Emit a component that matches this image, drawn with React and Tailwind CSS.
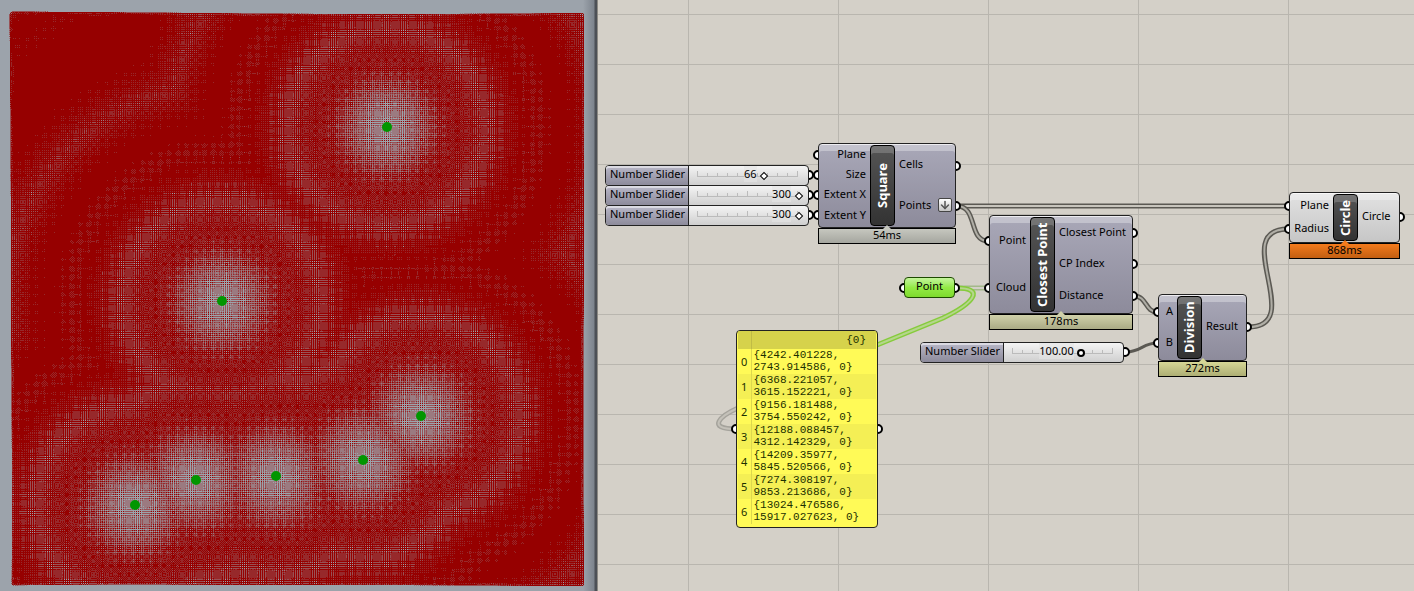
import React, { useState } from 'react';
import { ArrowDown } from 'lucide-react';
import clsx from 'clsx';

const GRID_COUNT = 301;
const SPACING = 568 / 300;
const HALF_STROKE = 0.42;
const FIELD_SIZE = 590;
const SAMPLES = FIELD_SIZE * 2;
const ATTRACTORS = [
  [387, 127],
  [222, 301],
  [421, 416],
  [363, 460],
  [276, 476],
  [196, 480],
  [135, 505],
];

// Draws every circle of the grid into a 2x supersampled buffer. The radius
// grows with the distance to the closest attractor.
function sampleCircles() {
  const buffer = new Uint8Array(SAMPLES * SAMPLES);
  for (let row = 0; row < GRID_COUNT; row++) {
    for (let col = 0; col < GRID_COUNT; col++) {
      const x = 13.5 + col * SPACING;
      const y = 15.5 + row * SPACING;
      const r = Math.min(...ATTRACTORS.map(([px, py]) => Math.hypot(px - x, py - y))) / 100;
      const outer = r + HALF_STROKE;
      const inner = Math.max(0, r - HALF_STROKE);
      for (let sy = Math.floor((y - outer) * 2); sy <= (y + outer) * 2; sy++) {
        for (let sx = Math.floor((x - outer) * 2); sx <= (x + outer) * 2; sx++) {
          const dx = sx / 2 + 0.25 - x;
          const dy = sy / 2 + 0.25 - y;
          const distance = dx * dx + dy * dy;
          if (distance <= outer * outer && distance >= inner * inner) {
            buffer[sy * SAMPLES + sx] = 1;
          }
        }
      }
    }
  }
  return buffer;
}

// One path per coverage level, made of horizontal runs
function buildField() {
  const buffer = sampleCircles();
  const levels = ['', '', '', '', ''];
  for (let y = 0; y < FIELD_SIZE; y++) {
    let start = 0;
    let previous = 0;
    for (let x = 0; x <= FIELD_SIZE; x++) {
      const at = y * 2 * SAMPLES + x * 2;
      const level =
        x === FIELD_SIZE ? -1 : buffer[at] + buffer[at + 1] + buffer[at + SAMPLES] + buffer[at + SAMPLES + 1];
      if (level !== previous) {
        if (previous > 0) levels[previous] += `M${start} ${y}h${x - start}v1h${start - x}z`;
        start = x;
        previous = level;
      }
    }
  }
  return levels;
}

const FIELD = buildField();

const COMPONENTS = [
  {
    name: 'Square', x: 220, y: 143, time: '54ms',
    size: 'w-[138px] h-[85px]', inputsWidth: 'w-[51px]',
    inputs: ['Plane', 'Size', 'Extent X', 'Extent Y'],
    outputs: ['Cells', 'Points'], flattened: 'Points',
    body: 'from-[#a9a8b8] to-[#8d8b9b]',
    timer: 'from-[#c6c7bf] to-[#a5a69f]', tip: 'border-b-[#c6c7bf]',
  },
  {
    name: 'Closest Point', x: 391, y: 215, time: '178ms',
    size: 'w-[144px] h-[99px]', inputsWidth: 'w-[40px]',
    inputs: ['Point', 'Cloud'],
    outputs: ['Closest Point', 'CP Index', 'Distance'],
    body: 'from-[#a9a8b8] to-[#8d8b9b]',
    timer: 'from-[#d0d1aa] to-[#aaab85]', tip: 'border-b-[#d0d1aa]',
  },
  {
    name: 'Division', x: 560, y: 294, time: '272ms',
    size: 'w-[89px] h-[67px]', inputsWidth: 'w-[18px]',
    inputs: ['A', 'B'],
    outputs: ['Result'],
    body: 'from-[#a9a8b8] to-[#8d8b9b]',
    timer: 'from-[#d6d796] to-[#adae74]', tip: 'border-b-[#d6d796]',
  },
  {
    name: 'Circle', x: 691, y: 192, time: '868ms',
    size: 'w-[111px] h-[51px]', inputsWidth: 'w-[43px]',
    inputs: ['Plane', 'Radius'],
    outputs: ['Circle'],
    body: 'from-[#e2e2e2] to-[#c6c6c6]',
    timer: 'from-[#f47b1c] to-[#c25f12]', tip: 'border-b-[#f47b1c]',
  },
];

const SLIDERS = [
  { id: 'size', x: 7, y: 165, min: 0, max: 100, value: 66 },
  { id: 'extent-x', x: 7, y: 185, min: 0, max: 300, value: 300 },
  { id: 'extent-y', x: 7, y: 205, min: 0, max: 300, value: 300 },
  { id: 'divisor', x: 322, y: 342, min: 0, max: 147, value: 100, decimals: 2 },
];

const PANEL_ROWS = [
  ['{4242.401228,', '2743.914586, 0}'],
  ['{6368.221057,', '3615.152221, 0}'],
  ['{9156.181488,', '3754.550242, 0}'],
  ['{12188.088457,', '4312.142329, 0}'],
  ['{14209.35977,', '5845.520566, 0}'],
  ['{7274.308197,', '9853.213686, 0}'],
  ['{13024.476586,', '15917.027623, 0}'],
];

const WIRES = [
  { d: 'M359 206H690', color: '#5b5953', core: '#c8c5bd' },
  { d: 'M359 206C380 206 370 241 390 241', color: '#5b5953', core: '#b0aea6' },
  { d: 'M536 296C549 296 547 312 559 312', color: '#5b5953', core: '#b0aea6' },
  { d: 'M650 327C710 327 630 229 690 229', color: '#5b5953', core: '#b0aea6' },
  { d: 'M358 288H390', color: '#a3b98a', core: '#d4d0c8' },
  { d: 'M358 288C388 288 376 303 345 318L279 345', color: '#86cb3c', core: '#b5d68c' },
  { d: 'M140 408C122 416 108 429 138 429', color: '#a5a39c', core: '#c4c1b9' },
];

const GRIPS = [
  [220, 155], [220, 175], [220, 195], [220, 215], [358, 166], [358, 206],
  [211, 175], [211, 195], [211, 215],
  [391, 241], [391, 288], [535, 233], [535, 264], [535, 296],
  [560, 312], [560, 343], [649, 327],
  [691, 206], [691, 229], [802, 217],
  [306, 288], [357, 288], [527, 352],
  [138, 429], [280, 429],
];

function Viewport() {
  return (
    <section
      aria-label="Viewport"
      className="w-[598px] shrink-0 border-r border-[#8b8983] bg-[#9ca3ab] bg-[linear-gradient(to_left,#4c5056_0,#4c5056_2px,#7d848d_3px,#9ca3ab_14px)]"
    >
      <svg width="597" height="591" className="block">
        {FIELD.map((d, level) => (
          <path key={level} d={d} fill="#960000" fillOpacity={level / 4} shapeRendering="crispEdges" />
        ))}
        {ATTRACTORS.map(([x, y]) => (
          <circle key={x} cx={x} cy={y} r="5" fill="#009600" />
        ))}
      </svg>
    </section>
  );
}

function Wires() {
  return (
    <svg className="absolute inset-0 size-full" fill="none">
      {WIRES.map(({ d, color, core }) => (
        <g key={d}>
          <path d={d} stroke={color} strokeWidth="5" />
          <path d={d} stroke={core} strokeWidth="2" />
        </g>
      ))}
      <path d="M528 352C543 352 545 343 559 343" stroke="#5b5953" strokeWidth="3" />
      {GRIPS.map(([x, y]) => (
        <circle key={`${x}-${y}`} cx={x} cy={y} r="4" fill="white" stroke="black" strokeWidth="2" />
      ))}
    </svg>
  );
}

function Component({ name, x, y, time, size, inputsWidth, inputs, outputs, flattened, body, timer, tip }) {
  return (
    <article className="absolute" style={{ left: x, top: y }}>
      <div
        className={clsx(
          'flex rounded-[4px] border border-[#222] bg-linear-to-b py-px shadow-[inset_0_1px_0_#ffffffb0,inset_0_7px_0_#ffffff50]',
          size,
          body
        )}
      >
        <ul className={clsx('flex flex-col pr-1 text-right', inputsWidth)}>
          {inputs.map((input) => (
            <li key={input} className="flex flex-1 items-center justify-end pb-0.5">{input}</li>
          ))}
        </ul>
        <h2 className="flex w-[25px] shrink-0 rotate-180 items-center justify-center rounded-[4px] border border-black bg-linear-to-t from-[#555] to-[#333] pl-0.5 text-[13px] leading-5 font-bold text-white shadow-[inset_0_-7px_0_#ffffff30] [writing-mode:vertical-rl]">
          {name}
        </h2>
        <ul className="flex flex-1 flex-col pl-1">
          {outputs.map((output) => (
            <li key={output} className="flex flex-1 items-center justify-between pr-[3px] pb-0.5">
              {output}
              {output === flattened && (
                <span className="flex size-[14px] items-center justify-center rounded-[2px] border border-[#444] bg-linear-to-b from-white to-[#c4c4c4]">
                  <ArrowDown size={12} strokeWidth={3} color="#555" />
                </span>
              )}
            </li>
          ))}
        </ul>
      </div>
      <div className={clsx('relative h-4 border border-black bg-linear-to-b text-center leading-3', timer)}>
        <span className={clsx('absolute -top-1 left-1/2 -ml-[5px] border-x-[5px] border-b-[5px] border-x-transparent', tip)} />
        {time}
      </div>
    </article>
  );
}

function NumberSlider({ id, x, y, min, max, value, decimals = 0 }) {
  const [current, setCurrent] = useState(value);
  const ratio = (current - min) / (max - min);

  return (
    <div
      className="absolute flex h-[21px] w-[204px] rounded-[4px] border border-[#222] bg-linear-to-b from-[#f4f4f4] to-[#cfcfcf]"
      style={{ left: x, top: y }}
    >
      <label
        htmlFor={id}
        className="w-[83px] rounded-l-[3px] border-r border-[#222] bg-linear-to-b from-[#b9b8c8] to-[#8d8b9b] pl-1 leading-4 shadow-[inset_0_2px_0_#ffffff80]"
      >
        Number Slider
      </label>
      <div className="relative ml-1 w-[109px]">
        <svg width="109" height="19" className="absolute inset-0" stroke="#bbb">
          <path d="M4 10.5h101M4.5 5v6M14.5 7v3M24.5 7v3M34.5 7v3M44.5 7v3M54.5 5v5M64.5 7v3M74.5 7v3M84.5 7v3M94.5 7v3M104.5 5v6" />
        </svg>
        <output
          htmlFor={id}
          className="absolute top-0 bg-[#e4e4e4]/60 leading-4"
          style={{ right: 112 - ratio * 101 }}
        >
          {current.toFixed(decimals)}
        </output>
        <input
          id={id}
          type="range"
          min={min}
          max={max}
          value={current}
          onChange={(e) => setCurrent(Number(e.target.value))}
          className={clsx(
            'absolute inset-0 w-[109px] appearance-none bg-transparent',
            '[&::-webkit-slider-thumb]:appearance-none [&::-webkit-slider-thumb]:border-black [&::-webkit-slider-thumb]:bg-white',
            decimals
              ? '[&::-webkit-slider-thumb]:size-2 [&::-webkit-slider-thumb]:rounded-full [&::-webkit-slider-thumb]:border-2'
              : '[&::-webkit-slider-thumb]:size-1.5 [&::-webkit-slider-thumb]:rotate-45 [&::-webkit-slider-thumb]:border'
          )}
        />
      </div>
    </div>
  );
}

function Panel() {
  return (
    <div className="absolute top-[330px] left-[138px] w-[142px] overflow-hidden rounded-[4px] border border-[#222] bg-[#fffa57] px-px pb-[3px]">
      <table className="w-full border-collapse font-['Liberation_Mono',monospace] leading-3 text-[#1c3000]">
        <thead>
          <tr className="h-[18px] bg-[#d6d24b]">
            <td className="w-[13px] border-r border-[#c0bc45]" />
            <th className="pr-2.5 text-right font-normal">{'{0}'}</th>
          </tr>
        </thead>
        <tbody>
          {PANEL_ROWS.map(([first, second], index) => (
            <tr key={index} className="h-[25px] odd:bg-[#fffa57] even:bg-[#f4ef55]">
              <th className="border-r border-[#dcd84e] text-center font-['Noto_Sans',sans-serif] font-normal">
                {index}
              </th>
              <td className="pb-px pl-0.5 whitespace-nowrap">
                {first}
                <br />
                {second}
              </td>
            </tr>
          ))}
        </tbody>
      </table>
    </div>
  );
}

export default function App() {
  return (
    <div className="flex min-h-screen overflow-hidden bg-[#d4d0c8] font-['Noto_Sans',sans-serif] text-[11px] text-black">
      <Viewport />
      <main className="relative flex-1 bg-[linear-gradient(#b9b6af_1px,transparent_1px),linear-gradient(90deg,#b9b6af_1px,transparent_1px)] bg-[size:50px_50px,150px_150px] bg-[position:0_14px,90px_0]">
        <Wires />
        {SLIDERS.map((slider) => (
          <NumberSlider key={slider.id} {...slider} />
        ))}
        {COMPONENTS.map((component) => (
          <Component key={component.name} {...component} />
        ))}
        <div className="absolute top-[277px] left-[306px] h-[21px] w-[51px] rounded-[4px] border border-[#1d4a00] bg-linear-to-b from-[#c4f59a] via-[#93ea45] to-[#7edb2c] text-center leading-4">
          Point
        </div>
        <Panel />
      </main>
    </div>
  );
}
